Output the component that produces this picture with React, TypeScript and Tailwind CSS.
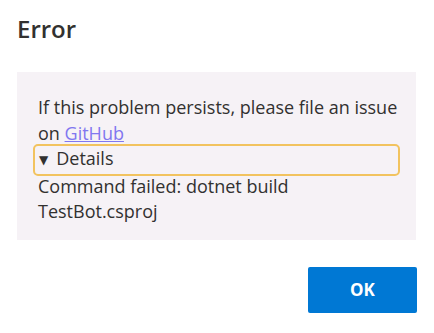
export default function App() {
  return (
    <div className="w-[434px] h-[333px] bg-white text-[#323130] font-['Open_Sans',sans-serif] relative">
      <div className="px-[17px] pt-[13px]">
        <h1 className="text-[24px] font-semibold leading-[32px]">Error</h1>
        <div className="mt-[27px] w-[399px] h-[168px] bg-[#f6f2f6] pl-[21px] pr-[18px] pt-[23px] text-[18px] leading-[25.5px]">
          <p>
            If this problem persists, please file an issue on{' '}
            <a href="#" className="text-[#8177f0] underline">GitHub</a>
          </p>
          <details open>
            <summary className="list-none -ml-[3px] pl-[4px] outline-2 outline-[#f2c35f] rounded-[3px] cursor-pointer">
              <span className="text-[12px] mr-[8px] font-['DejaVu_Sans'] align-[1px]">▼</span>Details
            </summary>
            <div>Command failed: dotnet build TestBot.csproj</div>
          </details>
        </div>
        <div className="flex justify-end mt-[27px]">
          <button className="w-[109px] h-[46px] bg-[#0078d4] text-white text-[17px] font-bold rounded-[2px]">
            OK
          </button>
        </div>
      </div>
    </div>
  );
}
